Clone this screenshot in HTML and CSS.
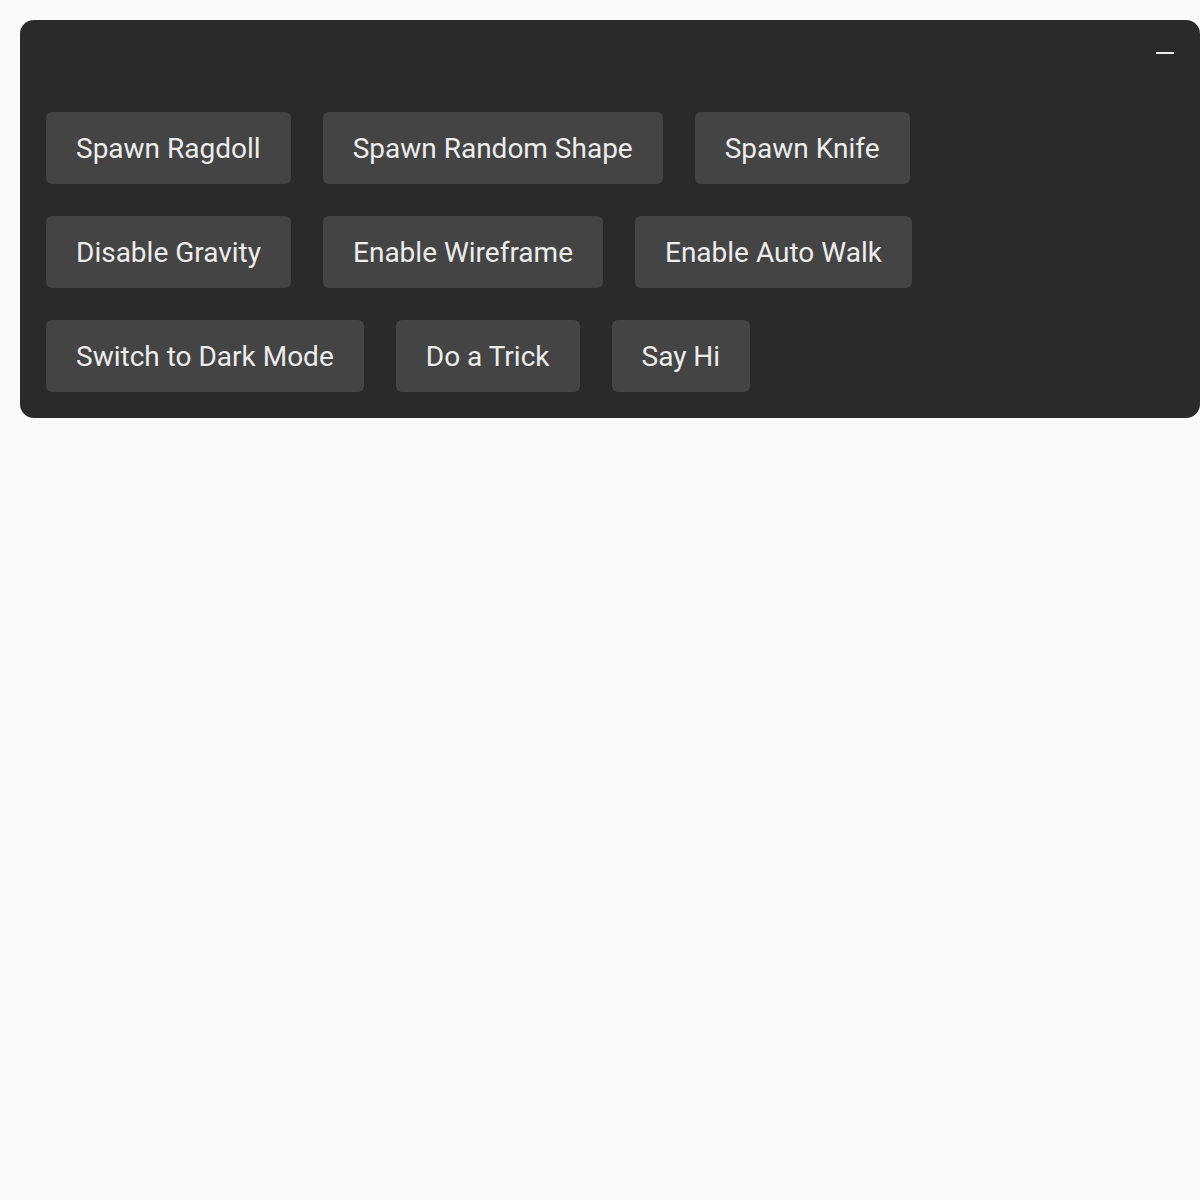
FILE: index.html
```html
<!DOCTYPE html>
<html>
<head>
<meta charset="utf-8">
<link rel="stylesheet" href="styles.css">
</head>
<body>
<div class="panel">
  <div class="titlebar">
    <button class="min-btn" aria-label="Minimize"><span class="min-line"></span></button>
  </div>
  <div class="rows">
    <div class="row">
      <button class="btn">Spawn Ragdoll</button>
      <button class="btn">Spawn Random Shape</button>
      <button class="btn">Spawn Knife</button>
    </div>
    <div class="row">
      <button class="btn">Disable Gravity</button>
      <button class="btn">Enable Wireframe</button>
      <button class="btn">Enable Auto Walk</button>
    </div>
    <div class="row">
      <button class="btn">Switch to Dark Mode</button>
      <button class="btn">Do a Trick</button>
      <button class="btn">Say Hi</button>
    </div>
  </div>
</div>
</body>
</html>
```
FILE: styles.css
```css
html, body {
  margin: 0;
  padding: 0;
  background: #fafafa;
}
body {
  padding: 20px 0 0 20px;
  font-family: Roboto, "Noto Sans", sans-serif;
}
.panel {
  width: 1180px;
  box-sizing: border-box;
  background: #2a2a2a;
  border-radius: 14px;
  padding: 0 26px 26px 26px;
}
.titlebar {
  height: 92px;
  display: flex;
  justify-content: flex-end;
  align-items: flex-start;
}
.min-btn {
  margin-top: 21px;
  margin-right: -5px;
  width: 28px;
  height: 24px;
  background: none;
  border: 0;
  padding: 0;
  display: flex;
  align-items: center;
  justify-content: center;
  cursor: pointer;
}
.min-line {
  display: block;
  width: 18px;
  height: 2px;
  background: #ececec;
}
.rows {
  display: flex;
  flex-direction: column;
  gap: 32px;
}
.row {
  display: flex;
  gap: 32px;
}
.btn {
  font-family: Roboto, "Noto Sans", sans-serif;
  font-size: 28px;
  line-height: 32px;
  padding: 21px 30px 19px;
  background: #444444;
  color: #ececec;
  border: 0;
  border-radius: 6px;
  cursor: pointer;
}
```
